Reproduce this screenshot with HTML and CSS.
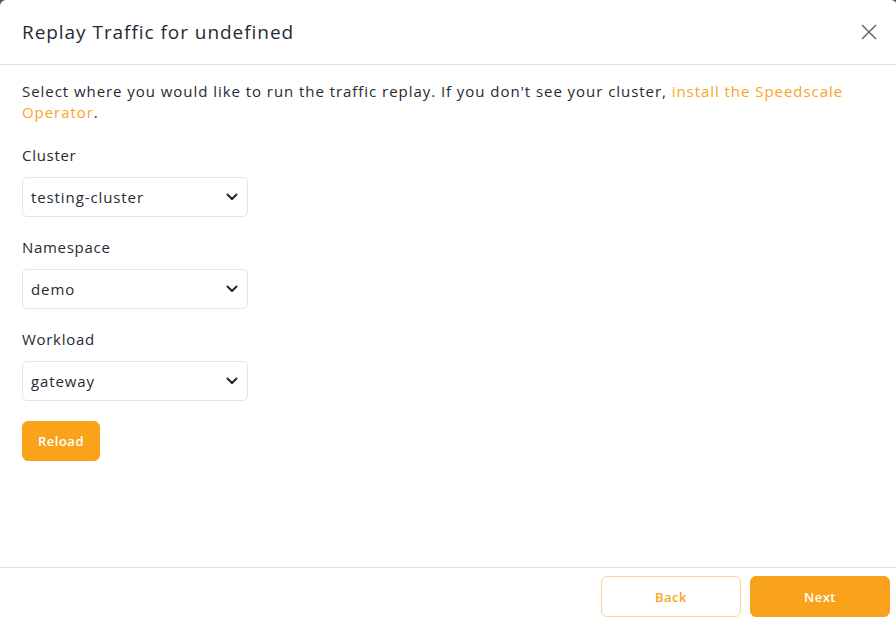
FILE: index.html
```html
<!DOCTYPE html>
<html lang="en">
<head>
  <meta charset="UTF-8" />
  <title>Replay Traffic</title>
  <link rel="stylesheet" href="styles.css">
</head>
<body>
  <div class="modal">
    <div class="modal-header">
      <h1>Replay Traffic for undefined</h1>
      <button class="modal-close" aria-label="Close">
        <svg width="16" height="16" viewBox="0 0 16 16"><path d="M1 1L15 15M15 1L1 15" stroke="#6b6e75" stroke-width="1.6" fill="none"/></svg>
      </button>
    </div>

    <div class="modal-body">
      <p class="intro">Select where you would like to run the traffic replay. If you don't see your cluster, <a href="#">install the Speedscale Operator</a>.</p>

      <div class="field">
        <label>Cluster</label>
        <div class="select">
          <span>testing-cluster</span>
          <svg width="12" height="8" viewBox="0 0 12 8"><path d="M1.5 1.5L6 6L10.5 1.5" stroke="#1f2430" stroke-width="2" fill="none" stroke-linecap="round" stroke-linejoin="round"/></svg>
        </div>
      </div>

      <div class="field">
        <label>Namespace</label>
        <div class="select">
          <span>demo</span>
          <svg width="12" height="8" viewBox="0 0 12 8"><path d="M1.5 1.5L6 6L10.5 1.5" stroke="#1f2430" stroke-width="2" fill="none" stroke-linecap="round" stroke-linejoin="round"/></svg>
        </div>
      </div>

      <div class="field">
        <label>Workload</label>
        <div class="select">
          <span>gateway</span>
          <svg width="12" height="8" viewBox="0 0 12 8"><path d="M1.5 1.5L6 6L10.5 1.5" stroke="#1f2430" stroke-width="2" fill="none" stroke-linecap="round" stroke-linejoin="round"/></svg>
        </div>
      </div>

      <button class="btn btn-primary btn-small">Reload</button>
    </div>

    <div class="modal-footer">
      <button class="btn btn-outline">Back</button>
      <button class="btn btn-primary">Next</button>
    </div>
  </div>
</body>
</html>
```

FILE: styles.css
```css
* {
  box-sizing: border-box;
  margin: 0;
  padding: 0;
}

body {
  font-family: 'Open Sans', 'Noto Sans', sans-serif;
  background-color: #55575c;
  color: #262a33;
  width: 896px;
  height: 622px;
  overflow: hidden;
}

.modal {
  background: #fff;
  width: 897px;
  height: 630px;
  border-radius: 6px;
  display: flex;
  flex-direction: column;
}

.modal-header {
  height: 65px;
  border-bottom: 1px solid #dfe0e3;
  display: flex;
  align-items: center;
  justify-content: space-between;
  padding: 0 22px;
}

.modal-header h1 {
  font-size: 19px;
  font-weight: 500;
  letter-spacing: 0.95px;
}

.modal-close {
  background: none;
  border: none;
  display: flex;
  margin-right: -2px;
  cursor: pointer;
}

.modal-body {
  flex: 1;
  padding: 16px 22px;
}

.intro {
  font-size: 15px;
  line-height: 21px;
  letter-spacing: 0.95px;
  margin-bottom: 22px;
}

.intro a {
  color: #f9a51f;
  text-decoration: none;
}

.field {
  margin-bottom: 20px;
}

.field label {
  display: block;
  font-size: 15px;
  line-height: 21px;
  letter-spacing: 0.7px;
  margin-bottom: 11px;
}

.select {
  width: 226px;
  height: 40px;
  border: 1px solid #e3e5ec;
  border-radius: 5px;
  display: flex;
  align-items: center;
  justify-content: space-between;
  padding: 0 9px 0 8px;
  font-size: 15px;
  letter-spacing: 0.9px;
}

.btn {
  font-family: inherit;
  font-weight: 600;
  font-size: 13px;
  letter-spacing: 0.5px;
  border-radius: 6px;
  cursor: pointer;
  width: 140px;
  height: 41px;
}

.btn-primary {
  background: #f9a31d;
  border: 1px solid #f9a31d;
  color: #fff;
}

.btn-small {
  width: 78px;
  height: 40px;
}

.btn-outline {
  background: #fff;
  border: 1px solid #fbd494;
  color: #f9a51f;
}

.modal-footer {
  border-top: 1px solid #dfe0e3;
  height: 63px;
  display: flex;
  justify-content: flex-end;
  gap: 9px;
  padding: 8px 7px 0 0;
}
```
